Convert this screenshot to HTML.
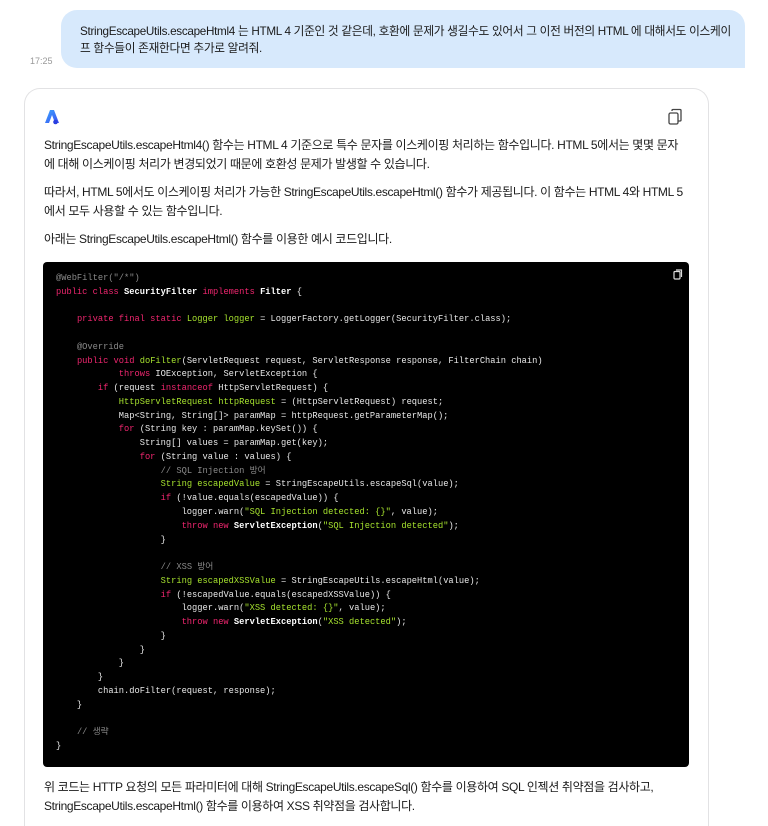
<!DOCTYPE html>
<html><head><meta charset="utf-8"><style>
*{margin:0;padding:0;box-sizing:border-box}
html,body{width:768px;height:826px;overflow:hidden}
body{background:#fff;font-family:"Liberation Sans","Noto Sans CJK KR",sans-serif;color:#222;position:relative}
.bubble{position:absolute;left:61px;top:10px;width:684px;height:58px;background:#d7e9fc;border-radius:16px 16px 0 16px;padding:13px 0 0 19px;font-size:11.7px;line-height:17px;letter-spacing:-0.3px;white-space:nowrap;color:#1a1a1a}
.time{position:absolute;left:30px;top:56px;font-size:9px;color:#999}
.card{position:absolute;left:24px;top:88px;width:685px;height:738px;border:1px solid #e2e2e4;border-bottom:none;border-radius:16px 16px 0 0}
.p{position:absolute;left:44px;font-size:12px;line-height:18.5px;letter-spacing:-0.35px;white-space:nowrap;color:#1a1a1a}
.code{position:absolute;left:43px;top:262px;width:646px;height:505px;background:#000;border-radius:4px}
pre{position:absolute;left:56px;top:272px;font-family:"Liberation Mono","Noto Sans CJK KR",monospace;font-size:8.72px;line-height:13.77px;color:#e8e8e8}
.k{color:#f0266f}.t{color:#a6e22e}.s{color:#a6e22e}.c{color:#8a8a8a}.w{color:#fff;font-weight:bold}
</style></head><body>
<div class="bubble">StringEscapeUtils.escapeHtml4 는 HTML 4 기준인 것 같은데, 호환에 문제가 생길수도 있어서 그 이전 버전의 HTML 에 대해서도 이스케이<br>프 함수들이 존재한다면 추가로 알려줘.</div>
<div class="time">17:25</div>
<div class="card"></div>
<svg style="position:absolute;left:43px;top:108px" width="18" height="18" viewBox="0 0 18 18"><defs><linearGradient id="g" x1="0" y1="0" x2="1" y2="1"><stop offset="0" stop-color="#3ba7ff"/><stop offset="1" stop-color="#3b4cf0"/></linearGradient></defs><path d="M7 2 L11 2 L16 15 L12 15 L9 7 L6 15 L2 15 Z" fill="url(#g)"/><circle cx="12.5" cy="14" r="2.3" fill="#2a3ee0"/></svg>
<svg style="position:absolute;left:666px;top:108px" width="18" height="18" viewBox="0 0 18 18" fill="none" stroke="#444" stroke-width="1.3"><rect x="3" y="5" width="9" height="11" rx="1.5"/><path d="M6 3 V2.5 Q6 1.5 7 1.5 H14 Q15 1.5 15 2.5 V12 Q15 13 14 13 H12"/></svg>
<div class="p" style="top:136px">StringEscapeUtils.escapeHtml4() 함수는 HTML 4 기준으로 특수 문자를 이스케이핑 처리하는 함수입니다. HTML 5에서는 몇몇 문자<br>에 대해 이스케이핑 처리가 변경되었기 때문에 호환성 문제가 발생할 수 있습니다.</div>
<div class="p" style="top:183px">따라서, HTML 5에서도 이스케이핑 처리가 가능한 StringEscapeUtils.escapeHtml() 함수가 제공됩니다. 이 함수는 HTML 4와 HTML 5<br>에서 모두 사용할 수 있는 함수입니다.</div>
<div class="p" style="top:230px">아래는 StringEscapeUtils.escapeHtml() 함수를 이용한 예시 코드입니다.</div>
<div class="code"></div>
<svg style="position:absolute;left:672px;top:268px" width="12" height="12" viewBox="0 0 12 12" fill="none" stroke="#ddd" stroke-width="1.2"><rect x="2" y="3.5" width="6" height="7.5" rx="1"/><path d="M4 2 H9.5 V9"/></svg>
<pre><span class="c">@WebFilter("/*")</span>
<span class="k">public class</span> <span class="w">SecurityFilter</span> <span class="k">implements</span> <span class="w">Filter</span> {

    <span class="k">private final static</span> <span class="t">Logger logger</span> = LoggerFactory.getLogger(SecurityFilter.class);

    <span class="c">@Override</span>
    <span class="k">public void</span> <span class="t">doFilter</span>(ServletRequest request, ServletResponse response, FilterChain chain)
            <span class="k">throws</span> IOException, ServletException {
        <span class="k">if</span> (request <span class="k">instanceof</span> HttpServletRequest) {
            <span class="t">HttpServletRequest httpRequest</span> = (HttpServletRequest) request;
            Map&lt;String, String[]&gt; paramMap = httpRequest.getParameterMap();
            <span class="k">for</span> (String key : paramMap.keySet()) {
                String[] values = paramMap.get(key);
                <span class="k">for</span> (String value : values) {
                    <span class="c">// SQL Injection 방어</span>
                    <span class="t">String escapedValue</span> = StringEscapeUtils.escapeSql(value);
                    <span class="k">if</span> (!value.equals(escapedValue)) {
                        logger.warn(<span class="s">"SQL Injection detected: {}"</span>, value);
                        <span class="k">throw new</span> <span class="w">ServletException</span>(<span class="s">"SQL Injection detected"</span>);
                    }

                    <span class="c">// XSS 방어</span>
                    <span class="t">String escapedXSSValue</span> = StringEscapeUtils.escapeHtml(value);
                    <span class="k">if</span> (!escapedValue.equals(escapedXSSValue)) {
                        logger.warn(<span class="s">"XSS detected: {}"</span>, value);
                        <span class="k">throw new</span> <span class="w">ServletException</span>(<span class="s">"XSS detected"</span>);
                    }
                }
            }
        }
        chain.doFilter(request, response);
    }

    <span class="c">// 생략</span>
}</pre>
<div class="p" style="top:778px">위 코드는 HTTP 요청의 모든 파라미터에 대해 StringEscapeUtils.escapeSql() 함수를 이용하여 SQL 인젝션 취약점을 검사하고,<br>StringEscapeUtils.escapeHtml() 함수를 이용하여 XSS 취약점을 검사합니다.</div>
</body></html>
